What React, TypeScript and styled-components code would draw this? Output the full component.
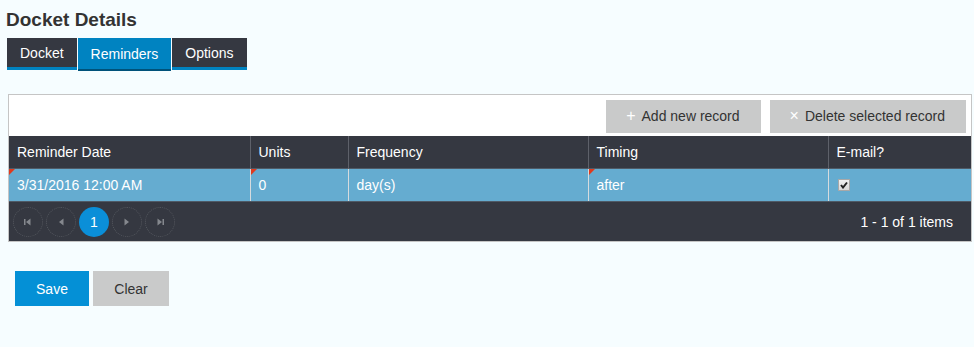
import React from "react";
import styled, { createGlobalStyle, css } from "styled-components";

interface IReminder {
  date: string;
  units: number;
  frequency: string;
  timing: string;
  email: boolean;
}

const reminders: IReminder[] = [
  { date: "3/31/2016 12:00 AM", units: 0, frequency: "day(s)", timing: "after", email: true },
];

const columns = [
  { title: "Reminder Date", width: 241 },
  { title: "Units", width: 98 },
  { title: "Frequency", width: 240 },
  { title: "Timing", width: 240 },
  { title: "E-mail?", width: 143 },
];

const GlobalStyle = createGlobalStyle`
  body {
    margin: 0;
    background: #f6fdff;
    font-family: "Liberation Sans", Arial, sans-serif;
    font-size: 14px;
    color: #333;
  }
`;

const Page = styled.div`
  padding: 9px 6px 0 6px;
`;

const Title = styled.h1`
  margin: 0;
  font-size: 19px;
  line-height: 22px;
  font-weight: 700;
  color: #333;
`;

const Tabs = styled.div`
  display: flex;
  gap: 1px;
  margin: 7px 0 0 1px;
`;

const Tab = styled.div<{ $active?: boolean }>`
  height: 29px;
  padding: 0 13px;
  display: flex;
  align-items: center;
  color: #fff;
  font-size: 14px;
  background: #353841;
  border-bottom: 3px solid #0083c1;
  ${(props) =>
    props.$active &&
    css`
      background: #0083c1;
      border-bottom: 2px solid #00527a;
      height: 31px;
    `}
`;

const Grid = styled.div`
  margin: 23px 0 0 2px;
  width: 962px;
  border: 1px solid #c5c5c5;
  background: #fff;
`;

const Toolbar = styled.div`
  height: 41px;
  display: flex;
  align-items: center;
  justify-content: flex-end;
  gap: 9px;
  padding-right: 5px;
  padding-top: 1px;
  box-sizing: border-box;
`;

const ToolButton = styled.button`
  height: 33px;
  border: none;
  background: #c9caca;
  color: #333;
  font-family: inherit;
  font-size: 14px;
  padding: 0 21px 0 20px;
  display: flex;
  align-items: center;
  gap: 6px;
`;

const ToolIcon = styled.span`
  color: #fff;
  font-size: 16px;
  line-height: 1;
`;

const Table = styled.table`
  width: 100%;
  border-collapse: collapse;
  table-layout: fixed;
`;

const HeadCell = styled.th`
  background: #353841;
  color: #fff;
  font-weight: 400;
  text-align: left;
  height: 32px;
  padding: 0 8px;
  border-left: 1px solid #5e616a;
  &:first-child {
    border-left: none;
  }
`;

const Cell = styled.td<{ $dirty?: boolean }>`
  position: relative;
  background: #65acd0;
  color: #fff;
  height: 32px;
  padding: 0 8px;
  border-top: 1px solid #4f5a66;
  border-left: 1px solid #d6dbde;
  &:first-child {
    border-left: none;
  }
  ${(props) =>
    props.$dirty &&
    css`
      &::before {
        content: "";
        position: absolute;
        top: 0;
        left: 0;
        border-top: 6px solid #e03a1d;
        border-right: 6px solid transparent;
      }
    `}
`;

const CheckBox = styled.span`
  display: inline-flex;
  width: 10px;
  height: 10px;
  background: linear-gradient(#f0f0f0, #d8d8d8);
  border: 1px solid #a8a8a8;
  align-items: center;
  justify-content: center;
  vertical-align: 1px;
  margin-left: 1px;
`;

const Pager = styled.div`
  height: 39px;
  background: #353841;
  border-top: 1px solid #4f5a66;
  display: flex;
  align-items: center;
  justify-content: space-between;
  padding: 0 18px 0 4px;
`;

const PagerButtons = styled.div`
  display: flex;
  gap: 3px;
`;

const PageButton = styled.div<{ $current?: boolean }>`
  width: 28px;
  height: 28px;
  border-radius: 50%;
  border: 1px dotted #55585f;
  display: flex;
  align-items: center;
  justify-content: center;
  color: #777a80;
  ${(props) =>
    props.$current &&
    css`
      background: #0b8fd8;
      border-color: #0b8fd8;
      color: #fff;
      font-size: 14px;
    `}
`;

const PagerInfo = styled.div`
  color: #fff;
  font-size: 14px;
`;

const Actions = styled.div`
  display: flex;
  gap: 4px;
  margin: 29px 0 0 9px;
`;

const ActionButton = styled.button<{ $primary?: boolean }>`
  height: 35px;
  border: none;
  font-family: inherit;
  font-size: 14px;
  width: 76px;
  background: #c9caca;
  color: #333;
  ${(props) =>
    props.$primary &&
    css`
      width: 74px;
      background: #0490d6;
      color: #fff;
    `}
`;

const Arrow = ({ dir, bar }: { dir: "left" | "right"; bar?: boolean }) => (
  <svg width="10" height="10" viewBox="0 0 10 10">
    {dir === "left" ? (
      <>
        {bar && <rect x="1" y="2" width="1.5" height="6" fill="#85888e" />}
        <polygon points="7.5,1.5 7.5,8.5 3,5" fill="#85888e" />
      </>
    ) : (
      <>
        <polygon points="2.5,1.5 2.5,8.5 7,5" fill="#85888e" />
        {bar && <rect x="7.5" y="2" width="1.5" height="6" fill="#85888e" />}
      </>
    )}
  </svg>
);

function App() {
  return (
    <>
      <GlobalStyle />
      <Page>
        <Title>Docket Details</Title>
        <Tabs>
          <Tab>Docket</Tab>
          <Tab $active>Reminders</Tab>
          <Tab>Options</Tab>
        </Tabs>
        <Grid>
          <Toolbar>
            <ToolButton>
              <ToolIcon>+</ToolIcon>Add new record
            </ToolButton>
            <ToolButton>
              <ToolIcon>×</ToolIcon>Delete selected record
            </ToolButton>
          </Toolbar>
          <Table>
            <colgroup>
              {columns.map((c) => (
                <col key={c.title} style={{ width: c.width }} />
              ))}
            </colgroup>
            <thead>
              <tr>
                {columns.map((c) => (
                  <HeadCell key={c.title}>{c.title}</HeadCell>
                ))}
              </tr>
            </thead>
            <tbody>
              {reminders.map((r) => (
                <tr key={r.date}>
                  <Cell $dirty>{r.date}</Cell>
                  <Cell $dirty>{r.units}</Cell>
                  <Cell>{r.frequency}</Cell>
                  <Cell $dirty>{r.timing}</Cell>
                  <Cell>
                    <CheckBox>
                      <svg width="8" height="8" viewBox="0 0 8 8">
                        <path d="M1 4 L3 6.5 L7 1.5" stroke="#222" strokeWidth="2" fill="none" />
                      </svg>
                    </CheckBox>
                  </Cell>
                </tr>
              ))}
            </tbody>
          </Table>
          <Pager>
            <PagerButtons>
              <PageButton>
                <Arrow dir="left" bar />
              </PageButton>
              <PageButton>
                <Arrow dir="left" />
              </PageButton>
              <PageButton $current>1</PageButton>
              <PageButton>
                <Arrow dir="right" />
              </PageButton>
              <PageButton>
                <Arrow dir="right" bar />
              </PageButton>
            </PagerButtons>
            <PagerInfo>1 - 1 of 1 items</PagerInfo>
          </Pager>
        </Grid>
        <Actions>
          <ActionButton $primary>Save</ActionButton>
          <ActionButton>Clear</ActionButton>
        </Actions>
      </Page>
    </>
  );
}

export default App;
